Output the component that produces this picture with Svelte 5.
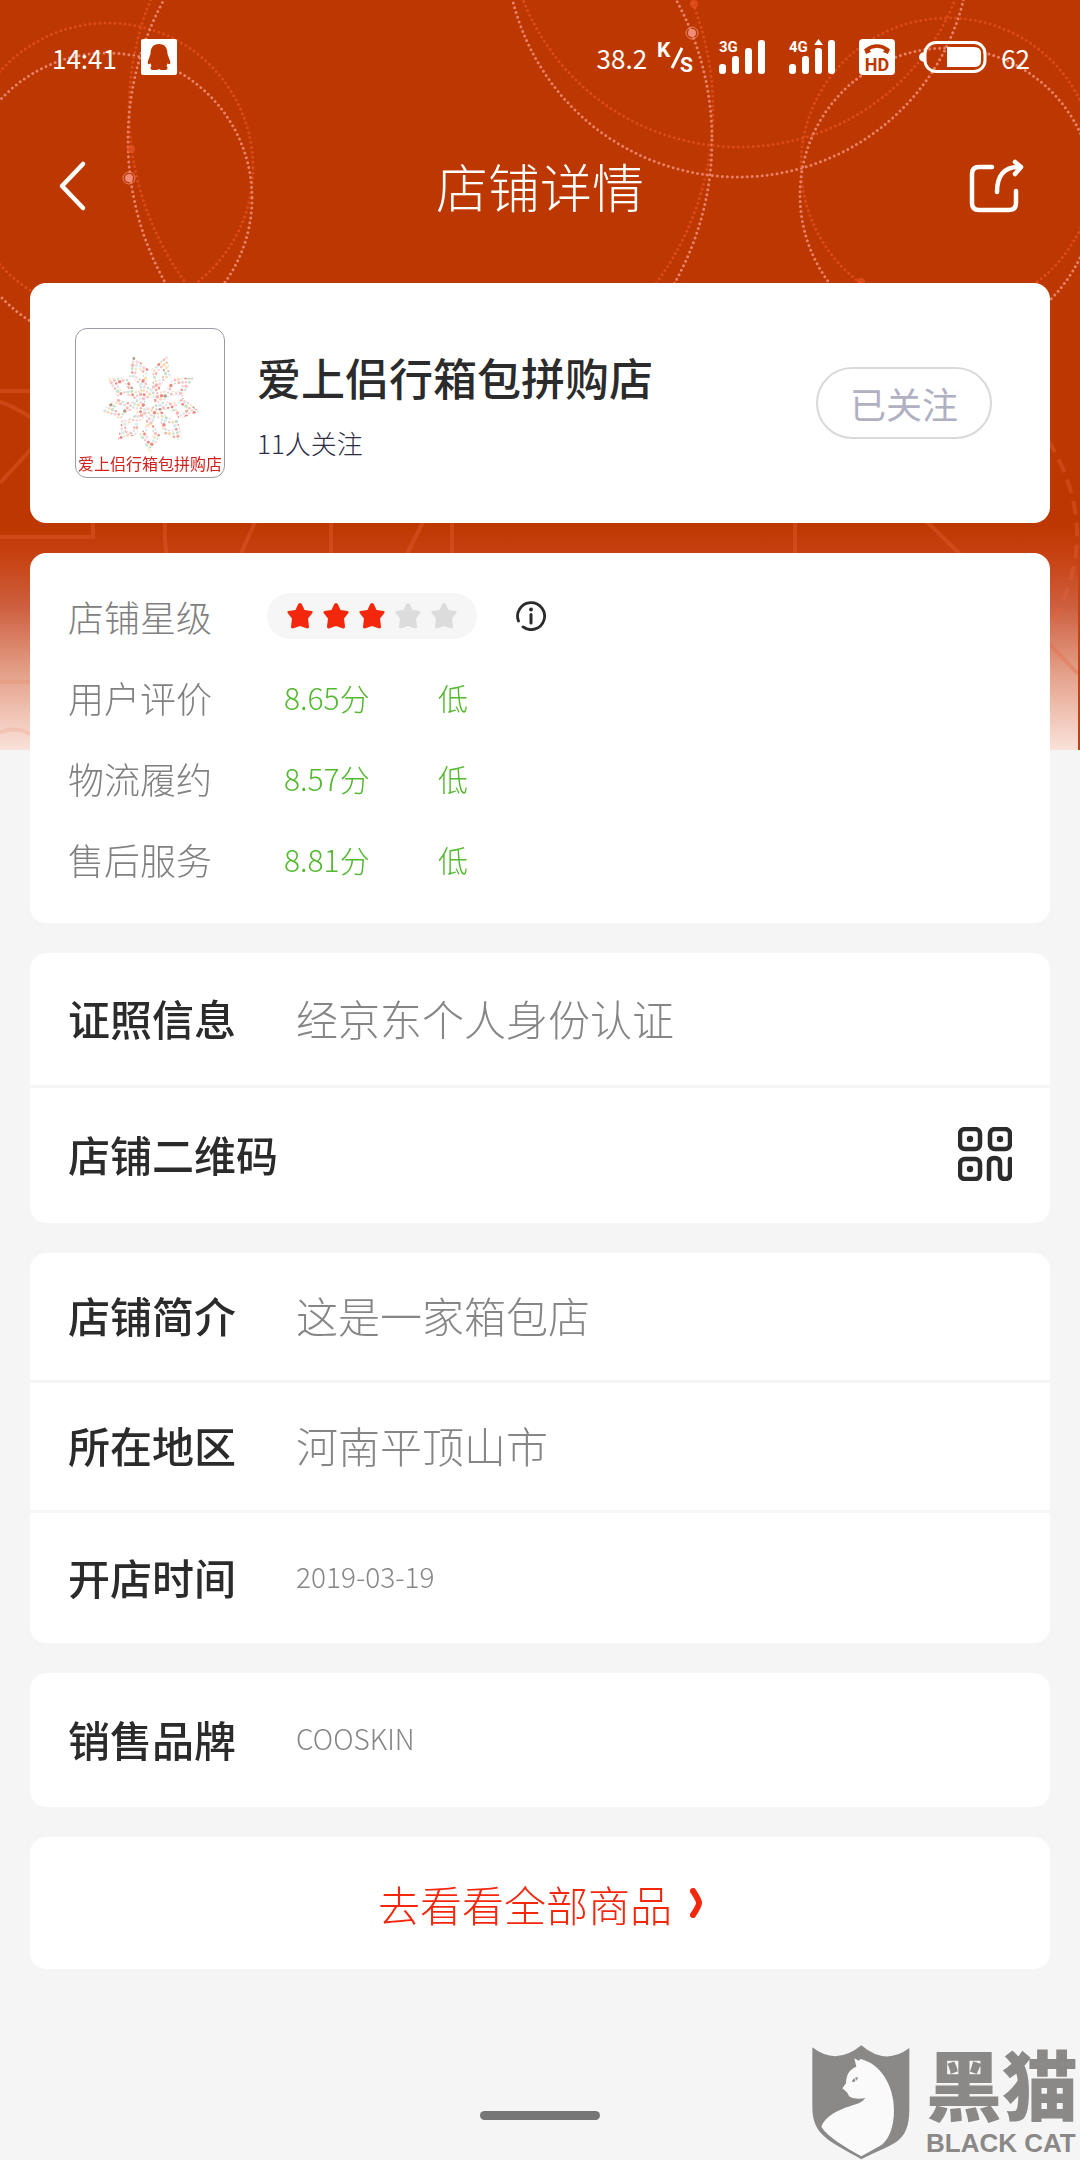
<script lang="ts">
  const shopName = '爱上侣行箱包拼购店';

  const scores = [
    { label: '用户评价', score: '8.65分', level: '低' },
    { label: '物流履约', score: '8.57分', level: '低' },
    { label: '售后服务', score: '8.81分', level: '低' },
  ];

  const details = [
    { label: '店铺简介', value: '这是一家箱包店' },
    { label: '所在地区', value: '河南平顶山市' },
    { label: '开店时间', value: '2019-03-19', latin: true },
  ];

  // dotted rings of the header, each drawn pale with an orange echo 30px above
  const rings = [
    { cx: 107, cy: 198, r: 145 },
    { cx: 420, cy: 140, r: 292 },
    { cx: 738, cy: -55, r: 232 },
    { cx: 947, cy: 195, r: 147 },
  ];

  const point = (r: number, deg: number) => {
    const a = (deg * Math.PI) / 180;
    return [75 - r * Math.sin(a), 75 + r * Math.cos(a)];
  };

  // nine-pointed star of the shop logo, one tip straight down
  const starPoints = Array.from({ length: 18 }, (_, i) =>
    point(i % 2 ? 33 : 51, i * 20).join(','),
  ).join(' ');

  const petals = Array.from({ length: 9 }, (_, i) => i * 40);
  const confetti = ['#e9776a', '#f6b8bd', '#b9dcc4', '#f7d9a0', '#f3a79c', '#cfe6ea', '#f5cfd6', '#a5876f'];

  const dots = Array.from({ length: 560 }, (_, i) => {
    const [x, y] = point(Math.sqrt(i / 560) * 51, i * 137.5);
    const color = i % 31 === 0 ? 7 : (i * 5 + (i >> 3)) % 7;
    return { x, y, r: 1.2 + (i % 3) * 0.3, fill: confetti[color] };
  });
</script>

<div class="page">
  <svg class="backdrop" viewBox="0 0 1080 750" preserveAspectRatio="xMidYMin slice" aria-hidden="true">
    <defs>
      <linearGradient id="fade" x1="0" y1="0" x2="0" y2="1">
        <stop offset="0" stop-color="#bd3800" />
        <stop offset="0.7" stop-color="#bd3800" />
        <stop offset="0.74" stop-color="#c64110" />
        <stop offset="0.81" stop-color="#cd6040" />
        <stop offset="0.9" stop-color="#e5a28c" />
        <stop offset="1" stop-color="#fae2da" />
      </linearGradient>
    </defs>
    <rect width="1080" height="750" fill="url(#fade)" />
    {#each rings as ring}
      <circle class="dotted echo" cx={ring.cx + 1} cy={ring.cy - 30} r={ring.r} />
      <circle class="dotted" cx={ring.cx} cy={ring.cy} r={ring.r} />
    {/each}
    <g fill="#e8512a" opacity="0.7">
      <circle cx="131" cy="149" r="4" />
      <circle cx="694" cy="4" r="4" />
      <circle cx="861" cy="282" r="4" />
    </g>
    <g fill="#f08c78">
      <circle cx="129" cy="178" r="4" />
      <circle cx="692" cy="33" r="4" />
    </g>
    <g fill="none" stroke="#e8846c">
      <circle cx="129" cy="178" r="6" />
      <circle cx="692" cy="33" r="6" />
    </g>
    <g class="streets">
      <path d="M0 391H34M0 402Q16 407 34 420M0 483L34 446M0 537H93V500M165 500V530Q164 545 168 560M256 520L238 560M331 500V560M424 520L404 560M452 500V560M795 500V560M920 515L966 560" />
      <path d="M1046 640L1078 674" />
      <path d="M1048 440Q1106 535 1048 630" stroke-dasharray="14 8" />
      <path class="faint" d="M0 682H30M0 732Q18 726 30 734" />
    </g>
    <rect x="1078" y="560" width="2" height="190" fill="#c64110" />
  </svg>

  <header>
    <div class="status">
      <div class="group">
        <span>14:41</span>
        <svg width="36" height="36" viewBox="0 0 36 36" aria-hidden="true">
          <rect width="36" height="36" rx="2" fill="#fff" />
          <path
            fill="#bd3800"
            d="M18 5c-6 0-8.500 4-8.500 10L7 22c-.8 3 .4 4.500 2.300 2.200L10.500 27c-2 2-1 4 2 4h3.500l2-1 2 1h3.500c3 0 4-2 2-4l1.200-2.800c1.900 2.300 3.100.8 2.300-2.200l-2.500-7C26.500 9 24 5 18 5z"
          />
        </svg>
      </div>
      <div class="group">
        <div class="speed">
          <span>38.2</span>
          <svg width="38" height="36" viewBox="0 0 38 36">
            <g fill="#fff" font-weight="700" font-size="21">
              <text x="0" y="18">K</text>
              <text x="23" y="33">S</text>
            </g>
            <path d="M15 29L25 9" stroke="#fff" stroke-width="3" />
          </svg>
        </div>
        {#each ['3G', '4G'] as net}
          <svg width="46" height="36" viewBox="0 0 46 36">
            <text x="0" y="13" fill="#fff" font-size="15" font-weight="700">{net}</text>
            <g fill="#fff">
              <rect x="0" y="25" width="7" height="10" rx="3" />
              <rect x="13" y="17" width="7" height="18" rx="3" />
              <rect x="26" y="9" width="7" height="26" rx="3" />
              <rect x="39" y="1" width="7" height="34" rx="3" />
              {#if net === '4G'}<path d="M25 6l4.500-6 4.500 6z" />{/if}
            </g>
          </svg>
        {/each}
        <svg width="36" height="36" viewBox="0 0 36 36">
          <rect width="36" height="36" rx="4" fill="#fff" />
          <path d="M7 11Q18 3 29 11" fill="none" stroke="#bd3800" stroke-width="3.500" />
          <path d="M5 10l5 0 2 3-5 2zM31 10l-5 0-2 3 5 2z" fill="#bd3800" />
          <text x="18" y="32" text-anchor="middle" fill="#bd3800" font-size="18" font-weight="700">HD</text>
        </svg>
        <div class="battery">
          <svg width="68" height="32" viewBox="0 0 68 32" aria-hidden="true">
            <rect x="6" y="1.500" width="60" height="29" rx="11" fill="none" stroke="#fff" stroke-width="3" />
            <path d="M5 11q-5 1-5 5t5 5z" fill="#fff" />
            <path d="M28 6h27q7 0 7 6v8q0 6-7 6H28z" fill="#fff" />
          </svg>
          <span>62</span>
        </div>
      </div>
    </div>

    <nav>
      <button class="icon" aria-label="返回">
        <svg width="56" height="56" viewBox="0 0 56 56">
          <path d="M27 6L6 28l21 22" fill="none" stroke="#fff" stroke-width="4.500" stroke-linecap="round" stroke-linejoin="round" />
        </svg>
      </button>
      <h1>店铺详情</h1>
      <button class="icon" aria-label="分享">
        <svg width="56" height="56" viewBox="0 0 56 56">
          <g fill="none" stroke="#fff" stroke-width="4.500" stroke-linecap="round" stroke-linejoin="round">
            <path d="M24 9H11q-7 0-7 7v29q0 7 7 7h30q7 0 7-7V33" />
            <path d="M29 34C29 18 36 9 50 9M47 4l6 5-6 7" />
          </g>
        </svg>
      </button>
    </nav>
  </header>

  <main>
    <section class="card shop">
      <div class="logo">
        <svg viewBox="0 0 150 150" aria-hidden="true">
          <clipPath id="star"><polygon points={starPoints} /></clipPath>
          <g clip-path="url(#star)" opacity="0.85">
            {#each dots as dot}
              <circle cx={dot.x} cy={dot.y} r={dot.r} fill={dot.fill} />
            {/each}
          </g>
          {#each petals as deg}
            <g fill="#fff" transform="rotate({deg} 75 75)">
              <path d="M75 61q7-10 0-21-7 11 0 21z" />
              <path transform="rotate(20 75 75)" d="M75 51l4-7-4-7-4 7z" />
            </g>
          {/each}
          <circle cx="75" cy="75" r="5" fill="#fff" />
        </svg>
        <span>{shopName}</span>
      </div>
      <div class="intro">
        <h2>{shopName}</h2>
        <p>11人关注</p>
      </div>
      <button class="follow">已关注</button>
    </section>

    <section class="card rating">
      <div class="line">
        <span class="name">店铺星级</span>
        <span class="stars" role="img" aria-label="3 / 5">
          {#each [1, 2, 3, 4, 5] as n}
            <svg width="26" height="26" viewBox="0 0 26 26" fill={n <= 3 ? '#f2270c' : '#dcdcdc'}>
              <path d="M13 0q1.500 0 2 1.500L17.500 7l7 1q2 .5.500 2.500L21 15.500l1 8q0 2.500-2.500 1.700L13 23l-6.500 2.200Q4 26 4 23.500l1-8L1 10.500Q-.5 8.500 1.500 8l7-1L11 1.500Q11.500 0 13 0z" />
            </svg>
          {/each}
        </span>
        <button class="icon info" aria-label="星级说明">
          <svg width="30" height="30" viewBox="0 0 30 30">
            <path d="M2.500 20A13.500 13.500 0 1 1 7 25.900" fill="none" stroke="#2b2b2b" stroke-width="2.800" stroke-linecap="round" />
            <path d="M15 13.500V22" stroke="#2b2b2b" stroke-width="3" stroke-linecap="round" />
            <circle cx="15" cy="8.500" r="1.900" fill="#2b2b2b" />
          </svg>
        </button>
      </div>
      {#each scores as row}
        <div class="line">
          <span class="name">{row.label}</span>
          <span class="score">{row.score}</span>
          <span class="level">{row.level}</span>
        </div>
      {/each}
    </section>

    <section class="card tall">
      <div class="row">
        <span class="label">证照信息</span>
        <span class="value">经京东个人身份认证</span>
      </div>
      <button class="row">
        <span class="label">店铺二维码</span>
        <svg class="qr" width="54" height="54" viewBox="0 0 54 54" aria-hidden="true">
          <g fill="none" stroke="#2b2b2b" stroke-width="4.500" stroke-linecap="round">
            <rect x="2" y="2" width="20" height="20" rx="5" />
            <rect x="32" y="2" width="20" height="20" rx="5" />
            <rect x="2" y="32" width="20" height="20" rx="5" />
            <path d="M31 52V36q0-5 5.500-5t5.500 5v11q0 5 5 5t5-5V32" />
          </g>
          <g fill="#2b2b2b">
            <circle cx="12" cy="12" r="3.200" />
            <circle cx="42" cy="12" r="3.200" />
            <circle cx="12" cy="42" r="3.200" />
          </g>
        </svg>
      </button>
    </section>

    <section class="card">
      {#each details as row}
        <div class="row">
          <span class="label">{row.label}</span>
          <span class="value" class:latin={row.latin}>{row.value}</span>
        </div>
      {/each}
    </section>

    <section class="card">
      <div class="row brand">
        <span class="label">销售品牌</span>
        <span class="value latin">COOSKIN</span>
      </div>
    </section>

    <a class="card all" href="#all">
      去看看全部商品
      <svg width="12" height="30" viewBox="0 0 12 30" aria-hidden="true">
        <path d="M3 3q6 9 6 12t-6 12" fill="none" stroke="#f2270c" stroke-width="6" stroke-linecap="round" />
      </svg>
    </a>
  </main>

  <footer>
    <div class="home-bar"></div>
    <div class="watermark">
      <svg width="98" height="115" viewBox="93 75 292 345" aria-hidden="true">
        <path d="M93 82Q165 138 240 76Q312 138 384 84V268C384 375 330 370 240 418C150 365 93 350 93 262Z" fill="#8b8888" />
        <path
          d="M219 115l13 7 6-5C300 132 338 200 338 270c0 50-14 85-36 104l-62 35C190 380 140 352 120 320c20-46 80-58 112-70q14-6 20-16-20 4-37 0-12-2-17-16l-15-13 11-15c0-25 11-43 31-50z"
          fill="#fafafa"
        />
        <path d="M212 186q2-14 18-14-2 14-18 14z" fill="#8b8888" />
        <path d="M220 174l4 10" stroke="#fafafa" stroke-width="3" />
      </svg>
      <div class="mark">
        <span class="cn">黑猫</span>
        <span class="en">BLACK CAT</span>
      </div>
    </div>
  </footer>
</div>

<style>
  :global(body) {
    margin: 0;
    background: #f5f5f5;
  }

  .page {
    position: relative;
    display: flex;
    flex-direction: column;
    min-height: 100vh;
    font-family: 'Noto Sans CJK SC', 'Noto Sans', sans-serif;
    color: #2b2b2b;
  }

  svg {
    display: block;
    flex: none;
  }

  svg text {
    font-family: 'Roboto', 'Liberation Sans', sans-serif;
  }

  button {
    padding: 0;
    border: 0;
    background: none;
    color: inherit;
    font: inherit;
    text-align: left;
    cursor: pointer;
  }

  h1,
  h2,
  p {
    margin: 0;
    font-weight: 400;
  }

  .backdrop {
    position: absolute;
    top: 0;
    left: 0;
    width: 100%;
    height: 750px;
  }

  .dotted {
    fill: none;
    stroke: #e98069;
    stroke-width: 3;
    stroke-linecap: round;
    stroke-dasharray: 0 5;
  }

  .dotted.echo {
    stroke: #dc4a18;
  }

  .streets {
    fill: none;
    stroke: #e8653c;
    stroke-width: 4;
    opacity: 0.35;
  }

  .faint {
    opacity: 0.4;
  }

  header,
  main,
  footer {
    position: relative;
  }

  header {
    color: #fff;
  }

  .status {
    display: flex;
    align-items: center;
    justify-content: space-between;
    height: 114px;
    padding: 0 50px 0 52px;
    font-size: 26px;
  }

  .status svg {
    overflow: visible;
  }

  .group {
    display: flex;
    align-items: center;
    gap: 24px;
  }

  .speed {
    display: flex;
    align-items: center;
    gap: 10px;
  }

  .battery {
    display: flex;
    align-items: center;
    gap: 14px;
  }

  nav {
    display: flex;
    align-items: center;
    justify-content: space-between;
    height: 144px;
    padding: 0 56px;
  }

  h1 {
    font-size: 52px;
    line-height: 64px;
    font-weight: 300;
  }

  main {
    display: flex;
    flex-direction: column;
    gap: 30px;
    padding: 25px 30px 0;
  }

  .card {
    border-radius: 16px;
    background: #fff;
  }

  .shop {
    display: flex;
    align-items: center;
    gap: 32px;
    padding: 45px 58px 45px 45px;
  }

  .logo {
    position: relative;
    box-sizing: border-box;
    width: 150px;
    height: 150px;
    border: 1px solid #9a9aaa;
    border-radius: 12px;
    overflow: hidden;
  }

  .logo span {
    position: absolute;
    right: 0;
    bottom: 2px;
    left: 0;
    color: #d4201c;
    font-size: 16px;
    line-height: 24px;
    text-align: center;
    white-space: nowrap;
  }

  .intro {
    display: flex;
    flex: 1;
    flex-direction: column;
    gap: 16px;
  }

  h2 {
    font-size: 44px;
    line-height: 64px;
    font-weight: 500;
  }

  .intro p {
    color: #2e2d45;
    font-size: 26px;
    line-height: 36px;
    font-weight: 300;
  }

  .follow {
    box-sizing: border-box;
    width: 176px;
    height: 72px;
    border: 2px solid #d9d9dc;
    border-radius: 36px;
    color: #b0b0c2;
    font-size: 36px;
    text-align: center;
  }

  .rating {
    padding: 22px 38px 24px;
  }

  .line {
    display: flex;
    align-items: center;
    height: 81px;
    font-size: 36px;
    font-weight: 300;
  }

  .name {
    width: 199px;
    color: #808080;
  }

  .stars {
    display: flex;
    align-items: center;
    gap: 10px;
    height: 46px;
    padding: 0 20px;
    border-radius: 23px;
    background: #f6f6f6;
  }

  .info {
    margin-left: 39px;
  }

  .score,
  .level {
    color: #52b82e;
    font-size: 30px;
  }

  .score {
    width: 154px;
    padding-left: 17px;
  }

  .row {
    display: flex;
    box-sizing: border-box;
    align-items: center;
    width: 100%;
    height: 130px;
    padding: 0 38px 4px;
    font-size: 42px;
  }

  .tall .row {
    height: 135px;
  }

  .row:not(:last-child) {
    border-bottom: 3px solid #f5f5f5;
  }

  .row.brand {
    height: 134px;
  }

  .label {
    min-width: 228px;
    font-weight: 500;
  }

  .value {
    color: #868686;
    font-weight: 300;
  }

  .value.latin {
    font-size: 28px;
  }

  .qr {
    margin-left: auto;
  }

  .all {
    display: flex;
    align-items: center;
    justify-content: center;
    gap: 18px;
    height: 132px;
    color: #f2270c;
    font-size: 42px;
    font-weight: 300;
    text-decoration: none;
  }

  footer {
    display: flex;
    justify-content: center;
    align-items: flex-end;
    height: 150px;
    margin-top: auto;
  }

  .home-bar {
    width: 120px;
    height: 9px;
    margin-bottom: 40px;
    border-radius: 5px;
    background: #767676;
  }

  .watermark {
    position: absolute;
    right: 2px;
    bottom: 0;
    display: flex;
    align-items: flex-end;
    gap: 16px;
    color: #8b8888;
    font-weight: 900;
  }

  .mark {
    display: flex;
    flex-direction: column;
    gap: 8px;
    padding-bottom: 2px;
  }

  .cn {
    font-size: 76px;
    line-height: 76px;
  }

  .en {
    font-family: 'Liberation Sans', sans-serif;
    font-size: 26px;
    line-height: 30px;
    font-weight: 700;
    white-space: nowrap;
  }
</style>
